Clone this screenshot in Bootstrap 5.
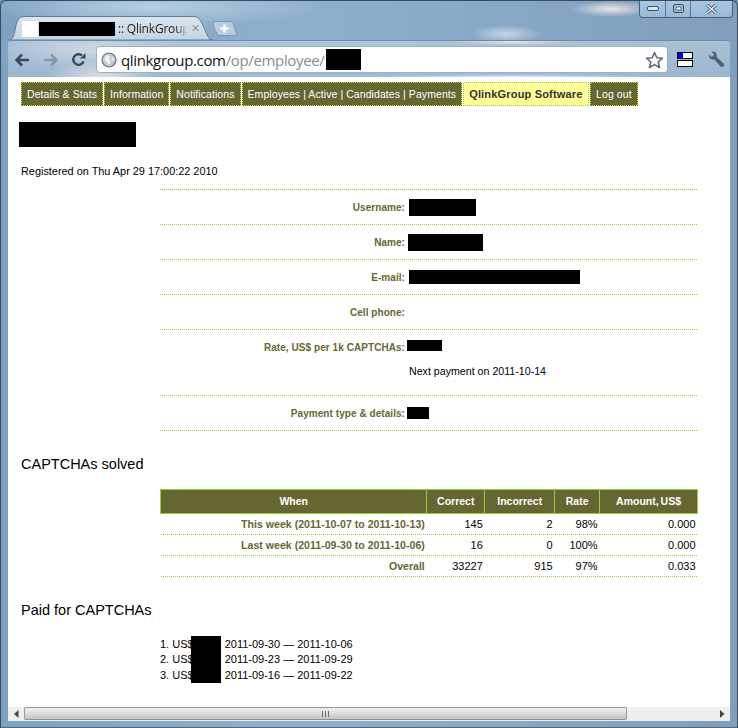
<!DOCTYPE html>
<html lang="en"><head><meta charset="utf-8"><title>QlinkGroup</title>
<link href="https://cdn.jsdelivr.net/npm/bootstrap@5.3.0/dist/css/bootstrap.min.css" rel="stylesheet">
<style>
html,body{margin:0;height:728px;width:738px;overflow:hidden;background:#6f93b5}
body{font-family:"Liberation Sans",Arial,sans-serif;font-size:11px;color:#000;line-height:normal}
.win{--dots:repeating-linear-gradient(90deg,#99cc33 0 1px,transparent 1px 2px);width:738px;height:728px;padding:0 7px 6px 7px;display:flex;flex-direction:column;border:1px solid #3d4a58;border-bottom-color:#4a6a88;border-radius:6px 6px 0 0;
 background:
 radial-gradient(ellipse 40px 8px at 610px 8px,#efe4e8 0,rgba(239,228,232,0) 100%),
 radial-gradient(ellipse 35px 9px at 505px 33px,#c8d6e4 0,rgba(200,214,228,0) 100%),
 radial-gradient(ellipse 90px 22px at 90px 50px,#e6dde2 0,rgba(230,221,226,0) 100%),
 radial-gradient(ellipse 170px 20px at 150px 6px,#b6cfe6 0,rgba(182,207,230,0) 100%),
 linear-gradient(90deg,#7ea2c2 0,#8fb0cd 40%,#7f9fbd 100%);}
.topbar{height:39px;flex:none;display:flex;justify-content:space-between;align-items:flex-start;margin-right:-3px}
.tabgroup{display:flex;align-items:flex-end;height:39px}
.tabwrap{position:relative;width:205px;height:24px;display:flex;align-items:center;padding:1px 0 0 14px;gap:1px}
.tabbg{position:absolute;left:0;top:0;width:205px;height:24px}
.tabwrap>span,.tabwrap>i{position:relative}
.favi{width:16px;height:16px;background:#fff;display:block}
.redact{background:#000;display:inline-block}
.tabred{width:76px;height:14px}
.tabtxt{font-family:"Open Sans","Liberation Sans",sans-serif;font-size:12px;letter-spacing:-.2px;margin-left:2px;width:70px;white-space:nowrap;color:#222;-webkit-mask-image:linear-gradient(90deg,#000 82%,transparent)}
.tabx{font-size:11px;color:#8a97a4;margin-left:2px;font-style:normal}
.newtab{width:26px;height:15px;flex:none;margin:0 0 4px -1px}
.ctrls{display:flex;height:17px;border:1px solid #4a5f75;border-top:0;border-radius:0 0 4px 4px;background:linear-gradient(#a9c6e2,#98b9d8)}
.ctrls span{display:flex;align-items:center;justify-content:center;border-left:1px solid #5c7590}
.ctrls span:first-child{border-left:0}
.toolbar{height:37px;flex:none;display:flex;align-items:center;background:
 radial-gradient(ellipse 60px 3px at 70% 1px,rgba(240,228,232,.9),rgba(240,228,232,0)),
 radial-gradient(ellipse 150px 3px at 70% 100%,rgba(235,235,240,.9),rgba(235,235,240,0)),
 radial-gradient(ellipse 55px 16px at 13% 100%,rgba(236,228,234,.85),rgba(236,228,234,0)),
 linear-gradient(rgba(201,218,233,.55),rgba(165,190,212,.75));border-top:1px solid #6e8ba6;padding:1px 0 0 0;border-radius:3px 3px 0 0}
.tbtn{width:28px;display:flex;justify-content:center;flex:none}
.omni{width:572px;height:27px;margin-left:4px;flex:none;background:#fff;border:1px solid #9fb2c4;border-radius:4px;display:flex;align-items:center;padding:0 3px 0 4px;font-family:"Open Sans","Liberation Sans",sans-serif;font-size:15px;color:#8b8b8b;letter-spacing:-.35px}
.omni b{font-weight:400;color:#111}
.urlred{width:35px;height:21px;margin-left:2px}
.view{flex:1;min-height:0;background:#fff;display:flex;flex-direction:column}
.page{flex:1;min-height:0;padding:5px 0 0 13px;overflow:hidden}
.qnav{gap:1px;flex-wrap:nowrap;height:24px}
.qnav .nav-link{height:24px;padding:0 5px;font-size:10.5px;letter-spacing:.075px;color:#fff;border:1px solid transparent;border-radius:0;white-space:nowrap;line-height:22px;
 background:linear-gradient(#666633,#666633) padding-box,repeating-conic-gradient(#b8e62a 0 25%,#666633 0 50%) 0 0/2px 2px border-box}
.qnav .nav-link.on{color:#333;font-weight:700;font-size:11px;letter-spacing:.18px;
 background:linear-gradient(#ffff99,#ffff99) padding-box,repeating-conic-gradient(#99cc33 0 25%,#ffff99 0 50%) 0 0/2px 2px border-box}
.qnav .nav-item:last-child .nav-link{padding:0 5.500px}
.nameblk{width:117px;height:25px;margin:16px 0 0 -2px;display:block}
.reg{margin:18px 0 0;font-size:10.9px;line-height:12px}
.sheet{margin:12px 0 0 139px;width:538px;padding-top:1px;background:var(--dots) 0 0/100% 1px no-repeat}
.frow{display:flex;height:35px;padding-bottom:1px;background:var(--dots) 0 100%/100% 1px no-repeat;align-items:center}
.frow.tall{height:66px;align-items:flex-start}
.flab{width:245px;text-align:right;color:#666633;font-weight:700;font-size:10px;letter-spacing:.06px;padding-top:1px;flex:none}
.fval{margin-left:4px;font-size:10.65px}
.tall .flab{padding-top:12px}
.sech{font-size:14.5px;font-weight:400;margin:25px 0 0;line-height:17px}
.stat{margin:16px 0 0 139px;width:538px;border-collapse:collapse}
.stat th{background:#666633;color:#fff;text-align:center;font-size:10.5px;font-weight:700;height:24px;border:1px solid #99cc33;padding:0 0 1px;word-spacing:-1px}
.stat td{height:21px;padding:0 2px 1px;text-align:right;background:var(--dots) 0 100%/100% 1px no-repeat;font-size:11px}
.stat td:first-child{color:#666633;font-weight:700;font-size:10.6px}
.paid{margin:17.500px 0 0 139px;padding:0;list-style:none;font-size:11px}
.paid li{height:15.500px;display:flex;align-items:center;white-space:pre}
.paidred{width:30px;height:15.500px;margin-left:-3px;margin-right:4px}
.scroll{height:14px;flex:none;display:flex;background:#efefef;align-items:stretch}
.sarrow{width:16px;display:flex;align-items:center;justify-content:center;flex:none}
.sthumb{width:603px;flex:none;border:1px solid #9a9a9a;border-bottom-color:#8f8f8f;border-radius:2px;background:linear-gradient(#f1f1f1,#dedede 45%,#c4c4c4);display:flex;align-items:center;justify-content:center;margin-bottom:1px}
.sgrip{width:7px;height:6px;background:repeating-linear-gradient(90deg,#6d6d6d 0 1px,transparent 1px 3px)}
.strack{flex:1}
</style></head><body>
<div class="win">
 <div class="topbar">
  <div class="tabgroup">
   <div class="tabwrap">
    <svg class="tabbg" viewBox="0 0 205 24"><defs><linearGradient id="tg" x1="0" y1="0" x2="0" y2="1"><stop offset="0" stop-color="#dbe6ef"/><stop offset="1" stop-color="#c3d4e3"/></linearGradient></defs><path d="M.5 24C5 24 6 20 7.500 12 9 4 11 .5 17 .5H186C191 .5 193 5 197 14 200 21 201 24 205 24Z" fill="url(#tg)" stroke="#5f7d99"/></svg>
    <i class="favi"></i><span class="redact tabred"></span><span class="tabtxt">:: QlinkGroup</span><span class="tabx">&#10005;</span>
   </div>
   <svg class="newtab" viewBox="0 0 26 15"><path d="M1 .5H18C21 .5 22 4 25 14.500H6C3 9 1 5 1 .5Z" fill="#b8cde0" stroke="#7b97b2"/><path d="M12.500 3.500V11.500M8.500 7.500H16.500" stroke="#fff" stroke-width="2.500"/></svg>
  </div>
  <div class="ctrls">
   <span style="width:25px"><svg width="12" height="6" viewBox="0 0 12 6"><rect x=".5" y=".5" width="11" height="4" rx="1.500" fill="#dfe8f0" stroke="#3d4f62"/></svg></span>
   <span style="width:25px"><svg width="11" height="10" viewBox="0 0 11 10"><rect x=".5" y=".5" width="10" height="8" rx="1.500" fill="none" stroke="#3d4f62"/><rect x="3" y="3" width="5" height="3" fill="#fff" stroke="#3d4f62" stroke-width=".8"/></svg></span>
   <span style="width:42px"><svg width="11" height="10" viewBox="0 0 11 10"><path d="M1 1L10 9M10 1L1 9" stroke="#3d4f62" stroke-width="3"/><path d="M1 1L10 9M10 1L1 9" stroke="#eef3f8" stroke-width="1.400"/></svg></span>
  </div>
 </div>
 <div class="toolbar">
  <span class="tbtn"><svg width="15" height="14" viewBox="0 0 15 14"><path d="M7 1.500L1.500 7 7 12.500M2 7H14" fill="none" stroke="#36495f" stroke-width="2.600"/></svg></span>
  <span class="tbtn"><svg width="15" height="14" viewBox="0 0 15 14"><path d="M8 1.500L13.500 7 8 12.500M13 7H1" fill="none" stroke="#8298ad" stroke-width="2.600"/></svg></span>
  <span class="tbtn"><svg width="15" height="15" viewBox="0 0 15 15"><path d="M12.500 9.500A5.300 5.300 0 1 1 11 3.500" fill="none" stroke="#36495f" stroke-width="2.400"/><path d="M9 6.500H14.500V1Z" fill="#36495f"/></svg></span>
  <div class="omni">
   <svg width="16" height="16" viewBox="0 0 16 16" class="me-1 flex-none"><circle cx="8" cy="8" r="7" fill="#c4c8cc" stroke="#6e7276" stroke-width="1.200"/><path d="M5 3L9 4 8 7 10 9 8 13 6 10 3.500 8Z" fill="#f3f3f3"/><path d="M11 4.500L13 7 12 9 10.500 7Z" fill="#f3f3f3"/></svg>
   <b>qlinkgroup.com</b>/op/employee/<span class="redact urlred"></span>
   <svg class="ms-auto" width="19" height="18" viewBox="0 0 19 18"><path d="M9.500 1.500L11.800 6.700 17.500 7.200 13.200 11 14.500 16.500 9.500 13.600 4.500 16.500 5.800 11 1.500 7.200 7.200 6.700Z" fill="#fff" stroke="#5d6b7b" stroke-width="1.600" stroke-linejoin="round"/></svg>
  </div>
  <svg width="16" height="15" viewBox="0 0 16 15" style="margin-left:9px"><rect x=".5" y=".5" width="15" height="6" fill="#fff" stroke="#000"/><rect x="1" y="1" width="5" height="5" fill="#0000e0"/><rect x=".5" y="8.500" width="15" height="6" fill="#fff" stroke="#000"/></svg>
  <svg width="17" height="17" viewBox="0 0 17 17" style="margin-left:15px"><path d="M1 3.500L3 5.800 5.300 5.300 5.800 3 3.500 .8C6 0 8.800 1.500 8.700 4.500 8.700 5 8.600 5.500 8.400 6L15.500 12.500C16.800 13.800 15.800 16 14 16 13.400 16 12.800 15.700 12.400 15.200L6 8.300C3 9.300 .2 6.500 1 3.500Z" fill="#4c6075"/></svg>
 </div>
 <div class="view">
  <div class="page">
   <ul class="nav qnav">
    <li class="nav-item"><a class="nav-link" href="#">Details &amp; Stats</a></li>
    <li class="nav-item"><a class="nav-link" href="#">Information</a></li>
    <li class="nav-item"><a class="nav-link" href="#">Notifications</a></li>
    <li class="nav-item"><a class="nav-link" href="#">Employees | Active | Candidates | Payments</a></li>
    <li class="nav-item"><a class="nav-link on" href="#">QlinkGroup Software</a></li>
    <li class="nav-item"><a class="nav-link" href="#">Log out</a></li>
   </ul>
   <span class="redact nameblk"></span>
   <p class="reg">Registered on Thu Apr 29 17:00:22 2010</p>
   <div class="sheet">
    <div class="frow"><span class="flab">Username:</span><span class="fval"><span class="redact" style="width:67px;height:17px;display:block"></span></span></div>
    <div class="frow"><span class="flab">Name:</span><span class="fval"><span class="redact" style="width:75px;height:17px;display:block;margin-left:-1px"></span></span></div>
    <div class="frow"><span class="flab">E-mail:</span><span class="fval"><span class="redact" style="width:171px;height:14px;display:block"></span></span></div>
    <div class="frow"><span class="flab">Cell phone:</span></div>
    <div class="frow tall"><span class="flab">Rate, US$ per 1k CAPTCHAs:</span><span class="fval"><span class="redact" style="width:35px;height:11px;display:block;margin:10px 0 0 -2px"></span><span class="d-block" style="margin-top:14px">Next payment on 2011-10-14</span></span></div>
    <div class="frow"><span class="flab">Payment type &amp; details:</span><span class="fval"><span class="redact" style="width:22px;height:12px;display:block;margin-left:-2px"></span></span></div>
   </div>
   <h2 class="sech">CAPTCHAs solved</h2>
   <table class="stat">
    <colgroup><col style="width:267px"><col style="width:58px"><col style="width:70px"><col style="width:45px"><col style="width:98px"></colgroup>
    <thead><tr><th>When</th><th>Correct</th><th>Incorrect</th><th>Rate</th><th>Amount, US$</th></tr></thead>
    <tbody>
     <tr><td>This week (2011-10-07 to 2011-10-13)</td><td>145</td><td>2</td><td>98%</td><td>0.000</td></tr>
     <tr><td>Last week (2011-09-30 to 2011-10-06)</td><td>16</td><td>0</td><td>100%</td><td>0.000</td></tr>
     <tr><td>Overall</td><td>33227</td><td>915</td><td>97%</td><td>0.033</td></tr>
    </tbody>
   </table>
   <h2 class="sech">Paid for CAPTCHAs</h2>
   <ol class="paid">
    <li>1. US$<span class="redact paidred"></span>2011-09-30 — 2011-10-06</li>
    <li>2. US$<span class="redact paidred"></span>2011-09-23 — 2011-09-29</li>
    <li>3. US$<span class="redact paidred"></span>2011-09-16 — 2011-09-22</li>
   </ol>
  </div>
  <div class="scroll">
   <span class="sarrow"><svg width="5" height="8" viewBox="0 0 5 8"><path d="M4.500 0V8L0 4Z" fill="#444"/></svg></span>
   <div class="sthumb"><i class="sgrip"></i></div>
   <div class="strack"></div>
   <span class="sarrow"><svg width="5" height="8" viewBox="0 0 5 8"><path d="M0 0V8L4.500 4Z" fill="#444"/></svg></span>
  </div>
 </div>
</div>
</body></html>
